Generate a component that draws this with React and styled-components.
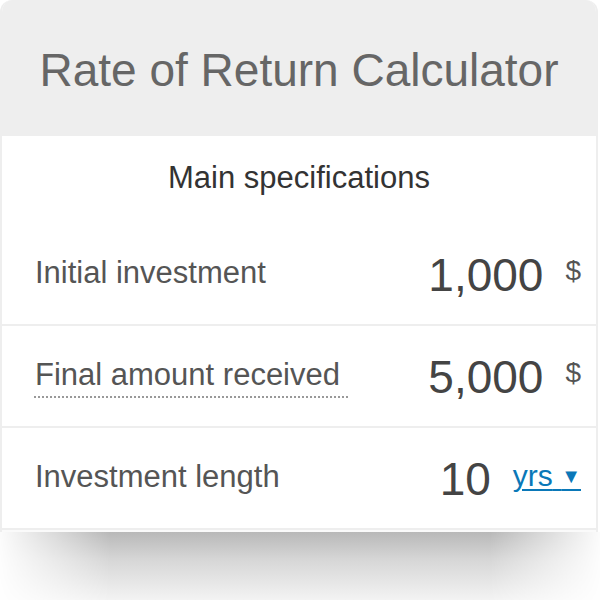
import React from "react";
import styled, { createGlobalStyle } from "styled-components";

const GlobalStyle = createGlobalStyle`
  body {
    margin: 0;
    background: #fff;
    font-family: "Liberation Sans", Arial, sans-serif;
  }
`;

const rows = [
  { label: "Initial investment", value: "1,000", unit: "$" },
  { label: "Final amount received", value: "5,000", unit: "$", dotted: true },
  { label: "Investment length", value: "10", unit: "yrs", select: true },
];

function App() {
  return (
    <>
      <GlobalStyle />
      <Page>
        <Card>
          <Header>
            <Title>Rate of Return Calculator</Title>
          </Header>
          <Section>Main specifications</Section>
          {rows.map((r) => (
            <Row key={r.label}>
              <Label dotted={r.dotted}>{r.label}</Label>
              <Field>
                <Value>{r.value}</Value>
                {r.select ? (
                  <Select>
                    yrs{"\u00a0"}
                    <Caret>▼</Caret>
                  </Select>
                ) : (
                  <Unit>{r.unit}</Unit>
                )}
              </Field>
            </Row>
          ))}
          <CardEnd />
        </Card>
        <Shadow />
      </Page>
    </>
  );
}

export default App;

//Page
const Page = styled.div`
  width: 600px;
  height: 600px;
  overflow: hidden;
  display: flex;
  flex-direction: column;
`;

//Card
const Card = styled.div`
  width: 598px;
  box-sizing: border-box;
  border: 2px solid #eee;
  border-top: none;
  border-bottom: none;
  border-radius: 12px 12px 0 0;
  overflow: hidden;
  background: #fff;
`;

const Header = styled.div`
  height: 136px;
  margin: 0 -2px;
  padding-top: 4px;
  box-sizing: border-box;
  background: #eee;
  display: flex;
  align-items: center;
  justify-content: center;
`;

const Title = styled.h1`
  margin: 0;
  font-size: 46px;
  font-weight: 400;
  color: #666;
`;

const Section = styled.div`
  height: 88px;
  padding-bottom: 4px;
  box-sizing: border-box;
  display: flex;
  align-items: center;
  justify-content: center;
  font-size: 31px;
  color: #333;
`;

//Rows
const Row = styled.div`
  height: 102px;
  box-sizing: border-box;
  border-bottom: 2px solid #eee;
  padding: 0 15px 0 33px;
  display: flex;
  align-items: center;
  justify-content: space-between;
`;

const Label = styled.span`
  font-size: 31px;
  color: #555;
  margin-top: -3px;
  ${(p) =>
    p.dotted &&
    `
    margin-left: -1px;
    padding: 0 8px 3px 1px;
    border-bottom: 2px dotted #999;
    margin-top: 3px;
  `}
`;

const Field = styled.div`
  display: flex;
  align-items: center;
  gap: 22px;
`;

const Value = styled.span`
  font-size: 46px;
  color: #444;
  margin-top: 2px;
`;

const Unit = styled.span`
  font-size: 28px;
  color: #555;
  margin-top: -6px;
`;

const Select = styled.span`
  font-size: 30px;
  color: #0a78b8;
  text-decoration: underline;
  text-decoration-thickness: 2px;
  text-underline-offset: 3px;
  margin-top: -4px;
`;

const Caret = styled.span`
  font-size: 20px;
  vertical-align: 3px;
`;

const CardEnd = styled.div`
  height: 2px;
  background: #fafafa;
`;

//Shadow
const Shadow = styled.div`
  height: 68px;
  background: linear-gradient(#b8b8b8, #d6d6d6 40%, #f3f3f3);
  -webkit-mask-image: linear-gradient(
    to right,
    rgba(0, 0, 0, 0.05),
    #000 110px,
    #000 490px,
    rgba(0, 0, 0, 0.05)
  );
  mask-image: linear-gradient(
    to right,
    rgba(0, 0, 0, 0.05),
    #000 110px,
    #000 490px,
    rgba(0, 0, 0, 0.05)
  );
`;
